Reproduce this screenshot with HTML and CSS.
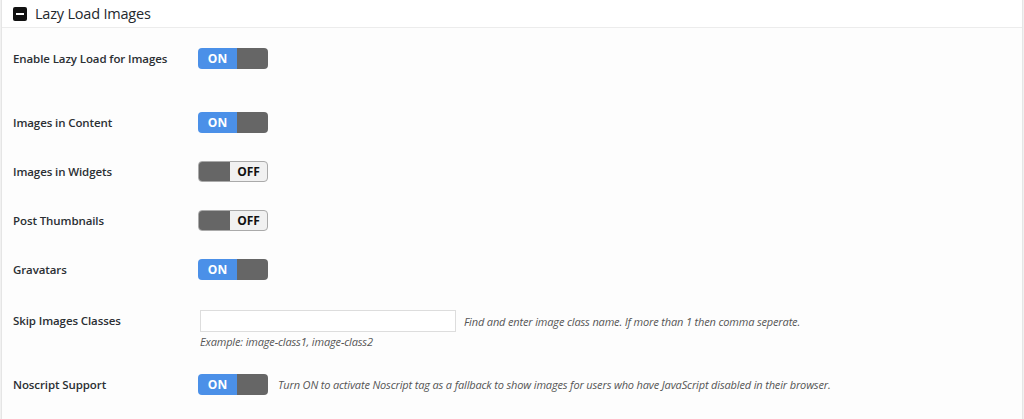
FILE: index.html
```html
<!DOCTYPE html>
<html lang="en">
<head>
    <meta charset="UTF-8">
    <title>Lazy Load Images</title>
    <link rel="stylesheet" href="styles.css">
</head>
<body>
    <div class="panel">
        <div class="panel-head">
            <span class="head-icon"><span class="head-minus"></span></span>
            <h2>Lazy Load Images</h2>
        </div>
        <div class="panel-body">
            <div class="row row-first">
                <div class="label">Enable Lazy Load for Images</div>
                <div class="field">
                    <span class="toggle on"><span class="state">ON</span><span class="knob"></span></span>
                </div>
            </div>
            <div class="row">
                <div class="label">Images in Content</div>
                <div class="field">
                    <span class="toggle on"><span class="state">ON</span><span class="knob"></span></span>
                </div>
            </div>
            <div class="row">
                <div class="label">Images in Widgets</div>
                <div class="field">
                    <span class="toggle off"><span class="knob"></span><span class="state">OFF</span></span>
                </div>
            </div>
            <div class="row">
                <div class="label">Post Thumbnails</div>
                <div class="field">
                    <span class="toggle off"><span class="knob"></span><span class="state">OFF</span></span>
                </div>
            </div>
            <div class="row">
                <div class="label">Gravatars</div>
                <div class="field">
                    <span class="toggle on"><span class="state">ON</span><span class="knob"></span></span>
                </div>
            </div>
            <div class="row row-top">
                <div class="label label-input">Skip Images Classes</div>
                <div class="field-stack">
                    <div class="field">
                        <input type="text" class="text-input">
                        <span class="desc">Find and enter image class name. If more than 1 then comma seperate.</span>
                    </div>
                    <div class="example">Example: image-class1, image-class2</div>
                </div>
            </div>
            <div class="row row-last">
                <div class="label">Noscript Support</div>
                <div class="field">
                    <span class="toggle on"><span class="state">ON</span><span class="knob"></span></span>
                    <span class="desc">Turn ON to activate Noscript tag as a fallback to show images for users who have JavaScript disabled in their browser.</span>
                </div>
            </div>
        </div>
    </div>
</body>
</html>
```

FILE: styles.css
```css
body {
    margin: 0;
    background: #f1f1f1;
    font-family: "Open Sans", "Noto Sans", sans-serif;
}

.panel {
    margin-left: 1px;
    margin-right: 1px;
    background: #fdfdfd;
    border-left: 1px solid #e5e5e5;
    border-right: 1px solid #e5e5e5;
    height: 419px;
}

.panel-head {
    display: flex;
    align-items: center;
    gap: 8px;
    height: 27px;
    padding-left: 11px;
    background: #fff;
    border-bottom: 1px solid #ececec;
}

.head-icon {
    width: 14px;
    height: 14px;
    border-radius: 2px;
    background: #111;
    display: flex;
    align-items: center;
    justify-content: center;
}

.head-minus {
    width: 8px;
    height: 2px;
    background: #fff;
}

.panel-head h2 {
    margin: 0;
    font-size: 14.5px;
    font-weight: 400;
    letter-spacing: -0.2px;
    color: #23282d;
}

.row {
    display: flex;
    align-items: center;
    padding: 14px 0 14px 11px;
}

.row-first {
    padding-top: 20px;
    padding-bottom: 29px;
}

.row-top {
    align-items: flex-start;
    padding-top: 16px;
}

.row-last {
    padding-top: 11px;
}

.label {
    width: 185px;
    flex-shrink: 0;
    font-size: 11.5px;
    font-weight: 600;
    letter-spacing: -0.1px;
    color: #2b2f33;
}

.label-input {
    line-height: 22px;
}

.field {
    display: flex;
    align-items: center;
    gap: 8px;
}

.toggle {
    display: flex;
    width: 70px;
    height: 21px;
    border-radius: 4px;
    overflow: hidden;
    box-sizing: border-box;
    font-size: 12px;
    font-weight: 700;
}

.toggle.on .state {
    width: 39px;
    background: #4b90e8;
    color: #fff;
    display: flex;
    align-items: center;
    justify-content: center;
}

.toggle.on .knob {
    flex: 1;
    background: #666;
}

.toggle.off {
    border: 1px solid #aaa;
    background: #f1f1f1;
}

.toggle.off .knob {
    width: 31px;
    background: #666;
}

.toggle.off .state {
    flex: 1;
    color: #111;
    display: flex;
    align-items: center;
    justify-content: center;
}

.text-input {
    width: 256px;
    height: 22px;
    margin: 0 0 0 2px;
    padding: 0 6px;
    box-sizing: border-box;
    border: 1px solid #ddd;
    background: #fff;
    border-radius: 0;
}

.desc {
    font-size: 11px;
    font-style: italic;
    letter-spacing: -0.15px;
    color: #555;
}

.field .toggle + .desc {
    margin-left: 2px;
}

.example {
    margin: 2px 0 0 2px;
    font-size: 11px;
    font-style: italic;
    letter-spacing: -0.15px;
    color: #555;
}
```
